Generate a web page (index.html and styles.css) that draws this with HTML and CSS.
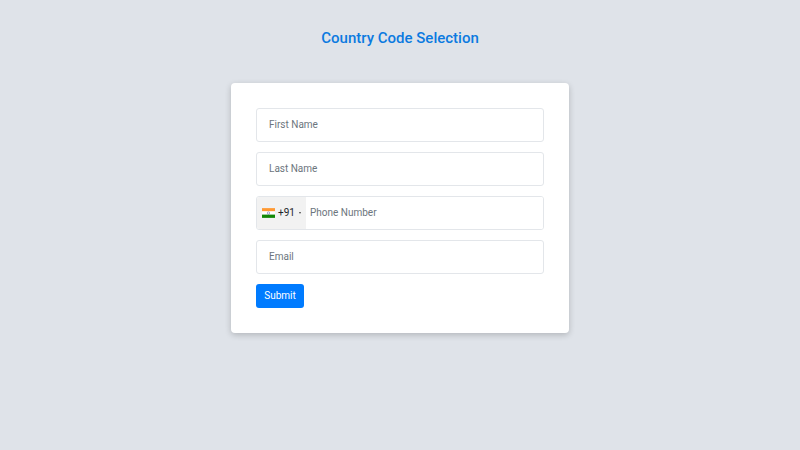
FILE: index.html
```html
<!DOCTYPE html>
<html lang="en">
<head>
    <meta charset="UTF-8">
    <title>Country Code Selection</title>
    <link rel="stylesheet" href="styles.css">
</head>
<body>
    <h1 class="title">Country Code Selection</h1>
    <form class="formCard">
        <input class="field" type="text" placeholder="First Name">
        <input class="field" type="text" placeholder="Last Name">
        <div class="phoneField">
            <div class="countryPicker">
                <svg class="flag" viewBox="0 0 20 15" width="13" height="10" aria-hidden="true">
                    <rect width="20" height="5" y="0" fill="#f93"/>
                    <rect width="20" height="5" y="5" fill="#fff"/>
                    <rect width="20" height="5" y="10" fill="#128807"/>
                    <circle cx="10" cy="7.5" r="1.8" fill="none" stroke="#008" stroke-width="0.5"/>
                </svg>
                <span class="dialCode">+91</span>
                <span class="arrow"></span>
            </div>
            <input class="phoneInput" type="tel" placeholder="Phone Number">
        </div>
        <input class="field" type="text" placeholder="Email">
        <button class="submitBtn" type="button">Submit</button>
    </form>
</body>
</html>
```

FILE: styles.css
```css
* {
    margin: 0;
    padding: 0;
    box-sizing: border-box;
}

body {
    font-family: Roboto, "Liberation Sans", sans-serif;
    background: #dfe3e9;
    display: flex;
    flex-direction: column;
    align-items: center;
    height: 450px;
    overflow: hidden;
}

.title {
    font-size: 15px;
    font-weight: 500;
    color: #0b7ae0;
    margin-top: 28px;
    margin-bottom: 1px;
    line-height: 20px;
}

.formCard {
    width: 338px;
    margin-top: 34px;
    padding: 25px;
    background: #fff;
    border-radius: 4px;
    box-shadow: 0 2px 6px rgba(0, 0, 0, 0.2);
    display: flex;
    flex-direction: column;
    align-items: flex-start;
    gap: 10px;
}

.field,
.phoneField {
    width: 100%;
    height: 34px;
    border: 1px solid #e3e6ea;
    border-radius: 3px;
    background: #fff;
    font-family: inherit;
    font-size: 10px;
}

.field {
    padding: 0 12px 2px;
}

.field::placeholder,
.phoneInput::placeholder {
    color: #6c757d;
    opacity: 1;
}

.phoneField {
    display: flex;
    overflow: hidden;
}

.countryPicker {
    width: 49px;
    background: #f2f2f2;
    display: flex;
    align-items: center;
    padding-left: 5px;
    padding-bottom: 1px;
    font-size: 10px;
    color: #212529;
}

.flag {
    flex: none;
    margin-right: 3px;
}

.arrow {
    margin-left: 4px;
    border-left: 1.5px solid transparent;
    border-right: 1.5px solid transparent;
    border-top: 2px solid #444;
}

.phoneInput {
    flex: 1;
    border: 0;
    outline: 0;
    padding: 0 0 2px 4px;
    font-family: inherit;
    font-size: 10px;
}

.submitBtn {
    height: 24px;
    width: 48px;
    padding-bottom: 2px;
    background: #007bff;
    color: #fff;
    border: 0;
    border-radius: 3px;
    font-family: inherit;
    font-size: 10px;
}
```
